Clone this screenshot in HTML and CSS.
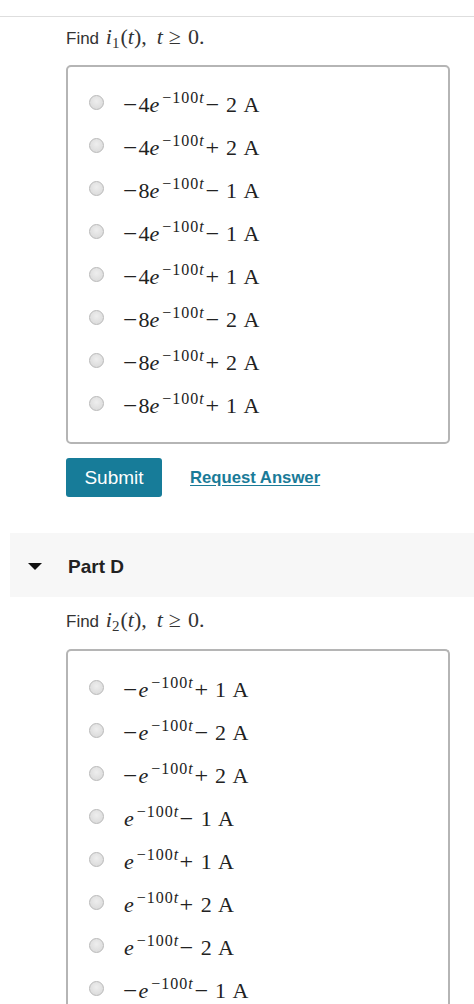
FILE: index.html
```html
<!DOCTYPE html>
<html>
<head>
<meta charset="utf-8">
<link rel="stylesheet" href="styles.css">
</head>
<body>
<div class="page">
  <div class="rule"></div>
  <section class="part">
    <p class="question">Find <span class="mx"><i>i</i><sub>1</sub>(<i>t</i>),<span class="sp"></span><i>t</i><span class="rel">≥</span>0.</span></p>
    <div class="choices">
      <label class="choice"><span class="radio"></span><span class="m"><span class="neg">−</span>4<i>e</i><sup>−100<i>t</i></sup><span class="bin">−</span>2 A</span></label>
      <label class="choice"><span class="radio"></span><span class="m"><span class="neg">−</span>4<i>e</i><sup>−100<i>t</i></sup><span class="bin">+</span>2 A</span></label>
      <label class="choice"><span class="radio"></span><span class="m"><span class="neg">−</span>8<i>e</i><sup>−100<i>t</i></sup><span class="bin">−</span>1 A</span></label>
      <label class="choice"><span class="radio"></span><span class="m"><span class="neg">−</span>4<i>e</i><sup>−100<i>t</i></sup><span class="bin">−</span>1 A</span></label>
      <label class="choice"><span class="radio"></span><span class="m"><span class="neg">−</span>4<i>e</i><sup>−100<i>t</i></sup><span class="bin">+</span>1 A</span></label>
      <label class="choice"><span class="radio"></span><span class="m"><span class="neg">−</span>8<i>e</i><sup>−100<i>t</i></sup><span class="bin">−</span>2 A</span></label>
      <label class="choice"><span class="radio"></span><span class="m"><span class="neg">−</span>8<i>e</i><sup>−100<i>t</i></sup><span class="bin">+</span>2 A</span></label>
      <label class="choice"><span class="radio"></span><span class="m"><span class="neg">−</span>8<i>e</i><sup>−100<i>t</i></sup><span class="bin">+</span>1 A</span></label>
    </div>
    <div class="actions">
      <button class="submit">Submit</button>
      <a class="request" href="#">Request Answer</a>
    </div>
  </section>

  <div class="part-header">
    <span class="caret"></span>
    <span class="part-title">Part D</span>
  </div>

  <section class="part">
    <p class="question q2">Find <span class="mx"><i>i</i><sub>2</sub>(<i>t</i>),<span class="sp"></span><i>t</i><span class="rel">≥</span>0.</span></p>
    <div class="choices c2">
      <label class="choice"><span class="radio"></span><span class="m"><span class="neg">−</span><i>e</i><sup>−100<i>t</i></sup><span class="bin">+</span>1 A</span></label>
      <label class="choice"><span class="radio"></span><span class="m"><span class="neg">−</span><i>e</i><sup>−100<i>t</i></sup><span class="bin">−</span>2 A</span></label>
      <label class="choice"><span class="radio"></span><span class="m"><span class="neg">−</span><i>e</i><sup>−100<i>t</i></sup><span class="bin">+</span>2 A</span></label>
      <label class="choice"><span class="radio"></span><span class="m"><i>e</i><sup>−100<i>t</i></sup><span class="bin">−</span>1 A</span></label>
      <label class="choice"><span class="radio"></span><span class="m"><i>e</i><sup>−100<i>t</i></sup><span class="bin">+</span>1 A</span></label>
      <label class="choice"><span class="radio"></span><span class="m"><i>e</i><sup>−100<i>t</i></sup><span class="bin">+</span>2 A</span></label>
      <label class="choice"><span class="radio"></span><span class="m"><i>e</i><sup>−100<i>t</i></sup><span class="bin">−</span>2 A</span></label>
      <label class="choice"><span class="radio"></span><span class="m"><span class="neg">−</span><i>e</i><sup>−100<i>t</i></sup><span class="bin">−</span>1 A</span></label>
    </div>
  </section>
</div>
</body>
</html>
```

FILE: styles.css
```css
html, body {
  margin: 0;
  padding: 0;
  background: #ffffff;
}

.page {
  width: 474px;
  font-family: "Liberation Sans", Arial, sans-serif;
  color: #222;
}

.rule {
  margin-top: 16px;
  height: 1px;
  background: #dedede;
}

.part {
  padding-left: 66px;
  padding-right: 24px;
}

.question {
  margin: 0;
  padding-top: 8px;
  height: 40px;
  font-size: 17px;
  line-height: 24px;
  color: #333;
}

.q2 {
  padding-top: 11px;
  height: 41px;
}

.mx {
  font-family: "Liberation Serif", "DejaVu Serif", serif;
  font-size: 22px;
  margin-left: 2px;
}

.mx sub {
  font-size: 15px;
  vertical-align: -4px;
  line-height: 0;
  margin-right: 1px;
}

.mx .sp {
  display: inline-block;
  width: 10px;
}

.mx .rel {
  display: inline-block;
  margin: 0 7px 0 6px;
}

.choices {
  border: 2px solid #b5b5b5;
  border-radius: 5px;
  padding: 14px 0 17px 0;
  display: flex;
  flex-direction: column;
}

.c2 {
  border-bottom: none;
  border-radius: 5px 5px 0 0;
  padding-top: 15px;
}

.choice {
  height: 43px;
  display: flex;
  align-items: center;
  padding-left: 21px;
}

.radio {
  width: 15px;
  height: 15px;
  border-radius: 50%;
  box-sizing: border-box;
  border: 1px solid #b9b9b9;
  background: radial-gradient(circle at 50% 40%, #eeeeee 0%, #d6d6d6 100%);
  flex: none;
}

.m {
  margin-left: 20px;
  font-family: "Liberation Serif", "DejaVu Serif", serif;
  font-size: 22px;
  color: #222;
  white-space: nowrap;
  line-height: 24px;
  padding-top: 4px;
  word-spacing: 2px;
}

.m .neg {
  display: inline-block;
  transform: scaleX(1.15);
  margin-right: 2px;
}

.m sup {
  font-size: 16px;
  letter-spacing: 1px;
  vertical-align: 9px;
  line-height: 0;
  margin-left: 3px;
  margin-right: 0;
  word-spacing: 0;
}

.m .bin {
  display: inline-block;
  transform: scaleX(1.1);
  margin: 0 8px 0 1px;
}

.actions {
  display: flex;
  align-items: center;
  margin-top: 14px;
  height: 39px;
}

.submit {
  width: 96px;
  height: 39px;
  border: none;
  border-radius: 3px;
  background: #177c99;
  color: #ffffff;
  font-family: "Liberation Sans", Arial, sans-serif;
  font-size: 19px;
  padding: 0;
}

.request {
  margin-left: 28px;
  color: #1a7b98;
  font-weight: bold;
  font-size: 16.7px;
  text-decoration: underline;
  text-underline-offset: 2px;
}

.part-header {
  margin-top: 36px;
  margin-left: 10px;
  height: 64px;
  padding-top: 3px;
  box-sizing: border-box;
  background: #f7f7f7;
  display: flex;
  align-items: center;
}

.caret {
  margin-left: 18px;
  width: 0;
  height: 0;
  border-left: 7px solid transparent;
  border-right: 7px solid transparent;
  border-top: 7px solid #111;
}

.part-title {
  margin-left: 26px;
  font-size: 19px;
  font-weight: bold;
  color: #222;
}
```
